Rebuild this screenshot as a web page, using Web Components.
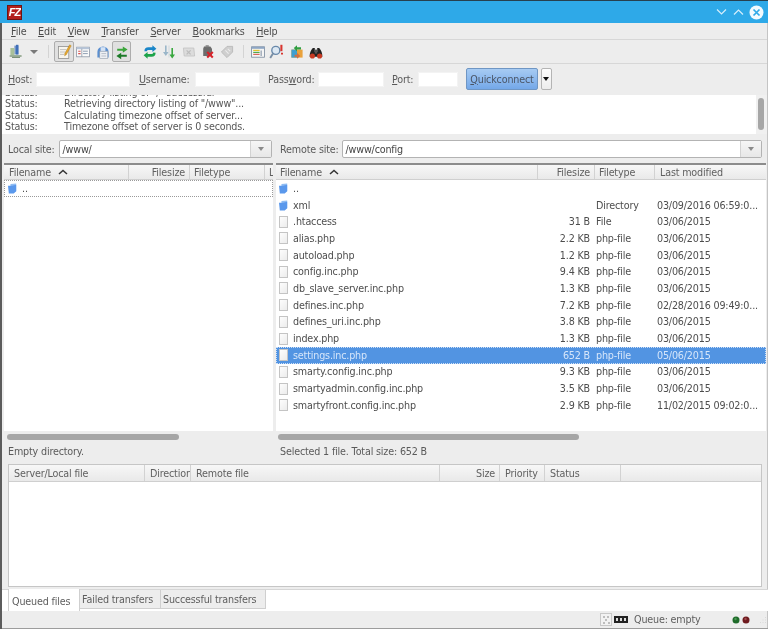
<!DOCTYPE html>
<html lang="en"><head><meta charset="utf-8"><title>FileZilla</title>
<style>html,body{margin:0;padding:0;height:629px;overflow:hidden;background:#ededed}body{font:9.6px "DejaVu Sans",sans-serif;color:#555}</style>
</head><body>
<fz-app></fz-app>
<script>
const ICONS={
site:'<path d="M8 2h5v11H8z" fill="#6f92c9"/><path d="M10 1h3v12h-3z" fill="#3f6fb8"/><path d="M3 5h5v9H3z" fill="#a9c09a"/><path d="M2 14h15v2H2z" fill="#8aa084"/><path d="M5 16h10v1.5H5z" fill="#7b8f78"/>',
log:'<rect x="3" y="3" width="13" height="15" fill="#f7f5ee" stroke="#8f8f8f"/><path d="M5 7h8M5 10h7M5 13h5" stroke="#b5b5b5"/><path d="M17 1l2 1.2-6 11-2.2 1.6.2-2.8z" fill="#e6a92e" stroke="#a8741a" stroke-width=".5"/>',
tree:'<rect x="2" y="4" width="16" height="12" fill="#fafafa" stroke="#8d97a5"/><path d="M2 4h16v2.5H2z" fill="#b6c4d8"/><path d="M8.5 6v10" stroke="#8d97a5"/><path d="M4 9h3M4 12h3" stroke="#d9534f" stroke-width="1.4"/><path d="M10 9h6M10 12h6" stroke="#8b9bb0" stroke-width="1.2"/>',
queue:'<path d="M3 10a7 7 0 0 1 14 0v7H3z" fill="#5b8fd0"/><path d="M7 4h6v5H7z" fill="#d6e4f5"/><rect x="6" y="9" width="10" height="9" fill="#eef0f4" stroke="#8d97a5" stroke-width=".7"/><path d="M8 12h6M8 15h6" stroke="#a9b2bf"/>',
transfer:'<path d="M4 6h7V3l6 4-6 4V8.500H4z" fill="#3aa53a"/><path d="M16 13.500H9V11l-6 4 6 4v-3h7z" fill="#1c7a28"/>',
sync:'<path d="M3 9a5 5 0 0 1 5-5h5V1.500L18 6l-5 4V7.500H8A2 2 0 0 0 6 9z" fill="#1a86c9"/><path d="M17 11a5 5 0 0 1-5 5H7v2.500L2 14l5-4v2.500h5a2 2 0 0 0 2-2z" fill="#1da34a"/>',
filter:'<path d="M5 2v8H2.500L6 15l3.500-5H7V2z" fill="#9ab6c9"/><path d="M13 5v8h-2.500l3.500 5 3.500-5H15V5z" fill="#39a83f"/><path d="M9.500 2h1v15h-1z" fill="#c9d3da"/>',
stop:'<path d="M3 5h13l1 10H4z" fill="#dcdcdc" stroke="#c2c2c2"/><path d="M7 8l5 5M12 8l-5 5" stroke="#bcbcbc" stroke-width="1.600"/>',
cancel:'<path d="M5 3h8l2 3v9H4V6z" fill="#6d6d6d"/><path d="M7 1.500h4V4H7z" fill="#888"/><path d="M9 10l7 7M16 10l-7 7" stroke="#d8232a" stroke-width="2.600"/>',
disc:'<path d="M3 10L10 3h7v7l-7 7z" fill="#cfcfcf" stroke="#b4b4b4"/><path d="M8 8l4 4M11 6l3 3" stroke="#ececec" stroke-width="1.300"/>',
manager:'<rect x="2" y="3.500" width="16" height="13" fill="#f5f5f5" stroke="#77889c"/><path d="M2 3.500h16V6H2z" fill="#8ea6c4"/><path d="M4 8h8" stroke="#e3c22b" stroke-width="1.500"/><path d="M4 10.500h8" stroke="#52a84e" stroke-width="1.500"/><path d="M4 13h8" stroke="#d9685c" stroke-width="1.500"/><path d="M14 8v7" stroke="#a8b2bf" stroke-width="2"/>',
compare:'<circle cx="8.500" cy="8" r="5" fill="#dce8f3" stroke="#6888aa" stroke-width="1.700"/><path d="M5 12l-3.500 5.500" stroke="#7a8fa5" stroke-width="2.400"/><path d="M15.500 1v8" stroke="#d8352f" stroke-width="2.600"/><path d="M15 11h2.500v2H15z" fill="#d8352f"/>',
dirsync:'<path d="M3 7h14v10H3z" fill="#e9a23c"/><path d="M3 7h7v10H3z" fill="#3f9fd0"/><path d="M6 5l4-3.500V4h5v3h-5v2.500z" fill="#2f9e41"/><path d="M14 15l-4 3.500V16H7v-2.500h3V11z" fill="#d8703a"/>',
find:'<path d="M2 16c0-5 1.500-8 4-11h2.500v5h3V5H14c2.500 3 4 6 4 11z" fill="#222"/><circle cx="5.500" cy="15" r="3.200" fill="#c73a23"/><circle cx="14.500" cy="15" r="3.200" fill="#c73a23"/><rect x="8.500" y="7" width="3" height="5" fill="#555"/>'
};
const svg=(n,s=20)=>`<svg width="${s}" height="${s}" viewBox="0 0 20 20" aria-hidden="true">${ICONS[n]}</svg>`;
function def(name,css,html,init){
  customElements.define(name,class extends HTMLElement{
    connectedCallback(){
      if(this.shadowRoot)return;
      const r=this.attachShadow({mode:'open'});
      r.innerHTML=`<style>${css}</style>`+(typeof html==='function'?html(this):html);
      if(init)init(this,r);
    }
  });
}
def('fz-titlebar',`
:host{display:flex;align-items:center;height:22px;border-top:1px solid #27404f;background:#2ea9e8;flex:none;margin-left:-2px;margin-right:-1px;position:relative;letter-spacing:0}
.logo{width:15px;height:15px;margin-left:7px;background:#b3201c;border:1px solid #6d1512;box-sizing:border-box;color:#fff;font:italic bold 11px/13px "Liberation Sans",sans-serif;text-align:center;letter-spacing:-1px;overflow:hidden}
.sp{flex:1}svg{display:block}
.b{width:17px;display:flex;justify-content:center}
.c{margin:0 4px 0 2px}`,
`<div class="logo">FZ</div><div class="sp"></div>
<div class="b"><svg width="11" height="8" viewBox="0 0 11 8"><path d="M1 1.500l4.500 4.500L10 1.500" fill="none" stroke="#d5eefb" stroke-width="1.200"/></svg></div>
<div class="b"><svg width="11" height="8" viewBox="0 0 11 8"><path d="M1 6.500L5.500 2 10 6.500" fill="none" stroke="#d5eefb" stroke-width="1.200"/></svg></div>
<div class="c"><svg width="15" height="15" viewBox="0 0 15 15"><circle cx="7.500" cy="7.500" r="7" fill="#f2fafe"/><path d="M4.500 4.500l6 6M10.500 4.500l-6 6" stroke="#2ea9e8" stroke-width="1.700"/></svg></div>`);
def('fz-menubar',`
:host{display:flex;height:16px;padding-left:9px;gap:11.7px;align-items:center;flex:none;color:#4c4c4c}
u{text-underline-offset:1px}span{white-space:nowrap}`,
()=>['File','Edit','View','Transfer','Server','Bookmarks','Help'].map(s=>`<span><u>${s[0]}</u>${s.slice(1)}</span>`).join(''));
def('fz-tool',`
:host{display:flex;align-items:center;justify-content:center;width:19.300px;height:21px;box-sizing:border-box;flex:none}
:host([on]){background:#e0e0e0;border:1px solid #adadad;border-radius:2px}
svg{display:block}`,
el=>svg(el.getAttribute('icon'),el.getAttribute('size')||16));
def('fz-toolbar',`
:host{display:flex;align-items:center;height:25px;box-sizing:border-box;border-top:1px solid #d7d7d7;border-bottom:1px solid #d7d7d7;padding-left:4px;flex:none}
.arrow{width:0;height:0;border:4px solid transparent;border-top:4px solid #7a7a7a;border-bottom:0;margin:1px 0 0 5px}
.sep{width:1px;height:13px;background:#d4d4d4;flex:none}
.s1{margin:0 5px 0 10px}.s3{margin:0 4.700px 0 6px}`,
`<fz-tool icon="site"></fz-tool><span class="arrow"></span><span class="sep s1"></span><fz-tool icon="log" on></fz-tool><fz-tool icon="tree"></fz-tool><fz-tool icon="queue"></fz-tool><fz-tool icon="transfer" on></fz-tool><span style="width:8.800px"></span><fz-tool icon="sync"></fz-tool><fz-tool icon="filter"></fz-tool><fz-tool icon="stop"></fz-tool><fz-tool icon="cancel"></fz-tool><fz-tool icon="disc"></fz-tool><span class="sep s3"></span><fz-tool icon="manager"></fz-tool><fz-tool icon="compare"></fz-tool><fz-tool icon="dirsync"></fz-tool><fz-tool icon="find"></fz-tool>`);
def('fz-quickconnect',`
:host{display:grid;grid-template-columns:28px 94px 9px 56px 65px 8px 50px 66px 8px 25.500px 40.500px 8px 72px 2.500px 11.500px;align-items:center;height:31px;box-sizing:border-box;padding:0 0 1px 6px;flex:none;color:#5a5a5a}
.i{background:#fff;height:15px;border-radius:1px;box-shadow:inset 0 0 0 1px #f3f3f3}
u{text-underline-offset:1px}
.q{height:22px;background:linear-gradient(#a7cbf3,#74a8e9);border:1px solid #6f96c4;border-radius:2px;box-sizing:border-box;color:#4a5566;display:flex;align-items:center;justify-content:center}
.d{height:22px;background:linear-gradient(#fdfdfd,#ececec);border:1px solid #b4b4b4;border-radius:2px;box-sizing:border-box;display:flex;align-items:center;justify-content:center}
.d i{border:3.500px solid transparent;border-top:4px solid #111;border-bottom:0}`,
`<span><u>H</u>ost:</span><div class="i"></div><span></span><span><u>U</u>sername:</span><div class="i"></div><span></span><span>Pass<u>w</u>ord:</span><div class="i"></div><span></span><span><u>P</u>ort:</span><div class="i"></div><span></span><div class="q"><span><u>Q</u>uickconnect</span></div><span></span><div class="d"><i></i></div>`);
def('fz-log',`
:host{display:block;height:39px;background:#fff;position:relative;overflow:hidden;flex:none}
.in{position:absolute;top:-8.500px;left:3px;display:grid;grid-template-columns:59px auto;grid-auto-rows:11.500px;line-height:11.500px;color:#575757}
.th{position:absolute;right:3px;top:3px;width:6px;height:32px;background:#a6a6a6;border-radius:3px}
.tr{position:absolute;right:0;top:0;bottom:0;width:11px;background:#f0f0f0}`,
`<div class="in"><span>Status:</span><span>Directory listing of "/" successful</span><span>Status:</span><span>Retrieving directory listing of "/www"...</span><span>Status:</span><span>Calculating timezone offset of server...</span><span>Status:</span><span>Timezone offset of server is 0 seconds.</span></div><div class="tr"></div><div class="th"></div>`);
def('fz-folder',`:host{display:block;width:9px;height:11px}svg{display:block}`,
`<svg width="9" height="11" viewBox="0 0 11 12" preserveAspectRatio="none"><path d="M3 1l7-.500V9l-7 1.500z" fill="#8fbcf3"/><path d="M0 3h5l5-1v7l-3 2.500H1z" fill="#5a98ec"/></svg>`);
def('fz-file',`:host{display:block;width:9px;height:12px;box-sizing:border-box;background:linear-gradient(135deg,#fdfdfd,#ececec);border:1px solid #c4c4c4}`,'');
def('fz-combo',`
:host{display:flex;height:18px;box-sizing:border-box;background:#fff;border:1px solid #b3b3b3;border-radius:2px;align-items:center;color:#444}
span{flex:1;padding-left:2.500px;white-space:nowrap}
b{display:flex;width:20px;height:16px;align-items:center;justify-content:center;background:linear-gradient(#f6f6f6,#e7e7e7);border-left:1px solid #d2d2d2}
i{border:3.500px solid transparent;border-top:4px solid #8a8a8a;border-bottom:0}`,
el=>`<span><slot></slot></span><b><i></i></b>`);
const f=(n,s,t,m,o)=>Object.assign({n,s,t,m},o||{});
const PANES={
L:{label:'Local site:',lw:51,sitePad:'padding:1px 1px 0 4px',path:'/www/',tpl:'124px 61px 75px 1fr',np:4,sb:[3,172],stp:4,status:'Empty directory.',
 cols:[['Filename','padding-left:5px'],['Filesize'],['Filetype'],['L']],
 rows:[{n:'..',dir:1,focus:1}]},
R:{label:'Remote site:',lw:62,sitePad:'padding:1px 4px 0 4px',path:'/www/config',tpl:'261px 57px 60px 1fr',np:3,sb:[2,301],stp:4,status:'Selected 1 file. Total size: 652 B',
 cols:[['Filename'],['Filesize'],['Filetype'],['Last modified','padding-left:5px']],
 rows:[{n:'..',dir:1},f('xml','','Directory','03/09/2016 06:59:0...',{dir:1}),f('.htaccess','31 B','File','03/06/2015'),f('alias.php','2.2 KB','php-file','03/06/2015'),f('autoload.php','1.2 KB','php-file','03/06/2015'),f('config.inc.php','9.4 KB','php-file','03/06/2015'),f('db_slave_server.inc.php','1.3 KB','php-file','03/06/2015'),f('defines.inc.php','7.2 KB','php-file','02/28/2016 09:49:0...'),f('defines_uri.inc.php','3.8 KB','php-file','03/06/2015'),f('index.php','1.3 KB','php-file','03/06/2015'),f('settings.inc.php','652 B','php-file','05/06/2015',{sel:1}),f('smarty.config.inc.php','9.3 KB','php-file','03/06/2015'),f('smartyadmin.config.inc.php','3.5 KB','php-file','03/06/2015'),f('smartyfront.config.inc.php','2.9 KB','php-file','11/02/2015 09:02:0...')]}};
def('fz-pane',`
:host{display:flex;flex-direction:column;min-width:0;overflow:hidden}
.site{height:29px;display:flex;align-items:center;box-sizing:border-box;flex:none;color:#5a5a5a}
.site span{white-space:nowrap}
fz-combo{flex:1}
.h{display:grid;height:17px;box-sizing:border-box;border-top:2px solid #8c8c8c;border-bottom:1px solid #cfcfcf;background:linear-gradient(#f7f7f7,#e9e9e9);flex:none;color:#606060;overflow:hidden}
.h>div{display:flex;align-items:center;border-left:1px solid #d2d2d2;padding:0 4px;white-space:nowrap;overflow:hidden;min-width:0}
.h>div:first-child{border-left:0}
.h>div.r{justify-content:flex-end}
.h svg{margin-left:7px;flex:none}
.body{flex:1;background:#fff;display:grid;grid-auto-rows:16.700px;align-content:start;overflow:hidden;color:#4d4d4d}
.row{display:grid;align-items:center;white-space:nowrap;position:relative;line-height:15px}
.row>*{min-width:0;overflow:hidden}
.n{display:flex;align-items:center;gap:5px}
.n fz-folder,.n fz-file{flex:none}
.sz{text-align:right;padding-right:4px}.ty{padding-left:2px}.md{padding-left:3px}
.sel{background:#5294e2;outline:1px dotted #cfe0f6;outline-offset:-1px;color:#d6e6fa}
.focus{outline:1px dotted #9a9a9a;outline-offset:-1px}
.sb{height:12px;background:#ededed;flex:none;display:flex;align-items:center}
.sb i{display:block;height:6px;background:#a6a6a6;border-radius:3px}
.st{height:16px;display:flex;align-items:center;flex:none;color:#5a5a5a}`,
el=>{
 const d=PANES[el.getAttribute('side')];
 const hd=d.cols.map((c,i)=>`<div class="${i==1?'r':''}" style="${c[1]||''}">${c[0]}${i==0?'<svg width="10" height="6" viewBox="0 0 10 6"><path d="M1 5l4-3.500L9 5" fill="none" stroke="#333" stroke-width="1.500"/></svg>':''}</div>`).join('');
 const rows=d.rows.map(r=>`<div class="row ${r.sel?'sel':''} ${r.focus?'focus':''}" style="grid-template-columns:${d.tpl}"><div class="n" style="padding-left:${d.np}px">${r.dir?'<fz-folder></fz-folder>':'<fz-file></fz-file>'}<span>${r.n}</span></div><div class="sz">${r.s||''}</div><div class="ty">${r.t||''}</div><div class="md">${r.m||''}</div></div>`).join('');
 return `<div class="site" style="${d.sitePad}"><span style="width:${d.lw}px">${d.label}</span><fz-combo>${d.path}</fz-combo></div>
 <div class="h" style="grid-template-columns:${d.tpl}">${hd}</div><div class="body">${rows}</div>
 <div class="sb"><i style="margin-left:${d.sb[0]}px;width:${d.sb[1]}px"></i></div><div class="st" style="padding-left:${d.stp}px">${d.status}</div>`;
});
def('fz-queue',`
:host{display:flex;flex-direction:column;height:123px;box-sizing:border-box;border:1px solid #c6c6c6;margin:0 5px 0 6px;background:#fff;flex:none}
.h{display:grid;grid-template-columns:136px 46px 249px 60px 45px 76px 1fr;height:17px;box-sizing:border-box;border-bottom:1px solid #cfcfcf;background:linear-gradient(#f7f7f7,#e9e9e9);color:#606060}
.h div{display:flex;align-items:center;padding:0 4px 0 5px;border-right:1px solid #d2d2d2;white-space:nowrap;overflow:hidden}
.h div:nth-child(2){padding-right:0}
.h div:last-child{border-right:0}.r{justify-content:flex-end}`,
`<div class="h"><div>Server/Local file</div><div>Direction</div><div>Remote file</div><div class="r">Size</div><div>Priority</div><div>Status</div><div></div></div>`);
def('fz-tabs',`
:host{display:flex;height:22px;background:#fff;border-top:1px solid #d6d6d6;box-sizing:border-box;flex:none;padding-left:6px;align-items:flex-start;color:#5e5e5e;margin-right:-1px}
div{white-space:nowrap;box-sizing:border-box}
.a{height:22px;width:72px;margin-top:-1px;background:#fff;border-left:1px solid #cfcfcf;border-right:1px solid #cfcfcf;padding:7px 0 0 3px;line-height:12px}
.t{height:19px;background:#ededed;border:1px solid #cfcfcf;border-top:0;border-left:0;padding:4px 0 0 2px;line-height:12px}`,
`<div class="a">Queued files</div><div class="t" style="width:81px">Failed transfers</div><div class="t" style="width:105px">Successful transfers</div>`);
def('fz-statusbar',`
:host{display:flex;align-items:center;height:18px;box-sizing:border-box;border-bottom:1px solid #9c9c9c;padding-left:598px;flex:none;color:#5e5e5e;margin-right:-1px}
svg{display:block;flex:none}.q{margin-left:6px;width:98px;white-space:nowrap}`,
`<svg width="13" height="13" viewBox="0 0 13 13"><rect x=".5" y=".5" width="11" height="12" fill="#f2f2f2" stroke="#c8c8c8"/><path d="M3 3h2v2H3zM7 3h2v2H7zM5 6h2v2H5zM3 9h2v2H3zM8 9h2v2H8z" fill="#bdbdbd"/></svg>
<svg style="margin-left:1px" width="14" height="7" viewBox="0 0 14 7"><rect width="14" height="7" fill="#222"/><path d="M2 2h2v3H2zM6 2h2v3H6zM10 2h2v3h-2z" fill="#ddd"/></svg>
<span class="q">Queue: empty</span>
<svg width="8" height="8" viewBox="0 0 8 8"><circle cx="4" cy="4" r="3.500" fill="#1f6b2a"/><circle cx="3.500" cy="3" r="1.200" fill="#4b9a55"/></svg>
<svg style="margin-left:2px" width="8" height="8" viewBox="0 0 8 8"><circle cx="4" cy="4" r="3.500" fill="#6e1a1e"/><circle cx="3.500" cy="3" r="1.200" fill="#a04b4f"/></svg>
<svg style="margin-left:9px" width="8" height="8" viewBox="0 0 8 8"><path d="M6 1h1v1H6zM3.500 3.500h1v1h-1zM6 3.500h1v1H6zM1 6h1v1H1zM3.500 6h1v1h-1zM6 6h1v1H6z" fill="#d9d9d9"/></svg>`);
def('fz-app',`
:host{display:flex;flex-direction:column;height:629px;width:768px;box-sizing:border-box;border-left:2px solid #5c5c5c;border-right:1px solid #c4c4c4;background:#ededed;font:9.600px "DejaVu Sans",sans-serif;letter-spacing:-.17px;color:#555;filter:blur(.35px)}
.split{display:grid;grid-template-columns:269px 490px;column-gap:3px;height:325px;flex:none;padding-left:2px}
.gap5{height:5px;flex:none}.gap2{height:2px;flex:none}`,
`<fz-titlebar></fz-titlebar><fz-menubar></fz-menubar><fz-toolbar></fz-toolbar><fz-quickconnect></fz-quickconnect><fz-log></fz-log><div class="split"><fz-pane side="L"></fz-pane><fz-pane side="R"></fz-pane></div><div class="gap5"></div><fz-queue></fz-queue><div class="gap2"></div><fz-tabs></fz-tabs><fz-statusbar></fz-statusbar>`);
</script>
</body></html>
